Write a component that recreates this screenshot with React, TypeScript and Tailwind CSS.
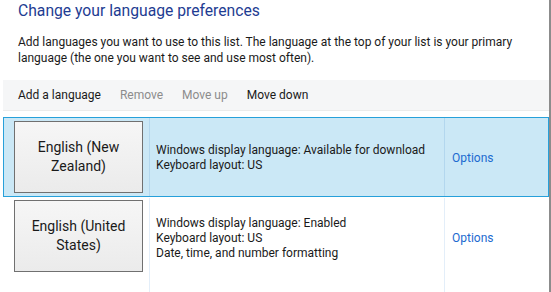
import React from "react";

const FONT = 'Roboto, "Noto Sans", Arial, sans-serif';

type Lang = {
  name: string[];
  lines: string[];
  selected: boolean;
};

const langs: Lang[] = [
  {
    name: ["English (New", "Zealand)"],
    lines: ["Windows display language: Available for download", "Keyboard layout: US"],
    selected: true,
  },
  {
    name: ["English (United", "States)"],
    lines: ["Windows display language: Enabled", "Keyboard layout: US", "Date, time, and number formatting"],
    selected: false,
  },
];

const Row = ({ lang }: { lang: Lang }) => {
  return (
    <div
      className={`flex border ${
        lang.selected ? "h-[80px] border-[#26a0da] bg-[#cbe8f6]" : "h-[96px] border-transparent bg-white border-b-0"
      }`}
    >
      <div className={`w-[145px] shrink-0 pl-[10px] ${lang.selected ? "pt-[3px]" : "pt-[2px]"}`}>
        <div className="w-[129px] h-[72px] border border-[#707070] bg-gradient-to-b from-[#f6f6f6] to-[#ebebeb] flex flex-col items-center justify-center text-[14px] leading-[19px] text-[#1a1a1a]">
          {lang.name.map((n) => (
            <span key={n}>{n}</span>
          ))}
        </div>
      </div>
      <div className={`w-px shrink-0 ${lang.selected ? "bg-[#b3d7ee]" : "bg-[#e3eef9]"}`} />
      <div className="w-[294px] shrink-0 pl-[6px]">
        <div className={`flex flex-col justify-center text-[12px] leading-[15px] text-[#1a1a1a] ${lang.selected ? "h-[80px]" : "h-[80px]"}`}>
          {lang.lines.map((l) => (
            <span key={l} className="whitespace-nowrap">{l}</span>
          ))}
        </div>
      </div>
      <div className={`w-px shrink-0 ${lang.selected ? "bg-[#b3d7ee]" : "bg-[#e3eef9]"}`} />
      <div className="flex-1 pl-[7px]">
        <div className={`flex items-center text-[12px] text-[#1c6bd0] ${lang.selected ? "h-[80px]" : "h-[80px]"}`}>Options</div>
      </div>
    </div>
  );
};

export default function App() {
  return (
    <div
      className="relative w-[551px] h-[292px] overflow-hidden bg-white border-r-2 border-[#8c8c8c]"
      style={{ fontFamily: FONT }}
    >
      <h1 className="pl-[18px] text-[15.7px] leading-[21px] text-[#1e3c92] font-normal">Change your language preferences</h1>
      <p className="mt-[13px] pl-[18px] pr-[20px] text-[12px] leading-[16px] text-[#1a1a1a]">
        Add languages you want to use to this list. The language at the top of your list is your primary language (the
        one you want to see and use most often).
      </p>
      <div className="mt-[14px] ml-[3px] h-[31px] bg-[#f5f6f7] border-b border-[#ebebeb] flex items-center gap-[19px] pl-[15px] text-[12px]">
        <span className="text-[#1a1a1a]">Add a language</span>
        <span className="text-[#8c8c8c]">Remove</span>
        <span className="text-[#8c8c8c]">Move up</span>
        <span className="text-[#1a1a1a]">Move down</span>
      </div>
      <div className="mt-[6px] ml-[3px]">
        {langs.map((l) => (
          <Row key={l.name[0]} lang={l} />
        ))}
      </div>
    </div>
  );
}
